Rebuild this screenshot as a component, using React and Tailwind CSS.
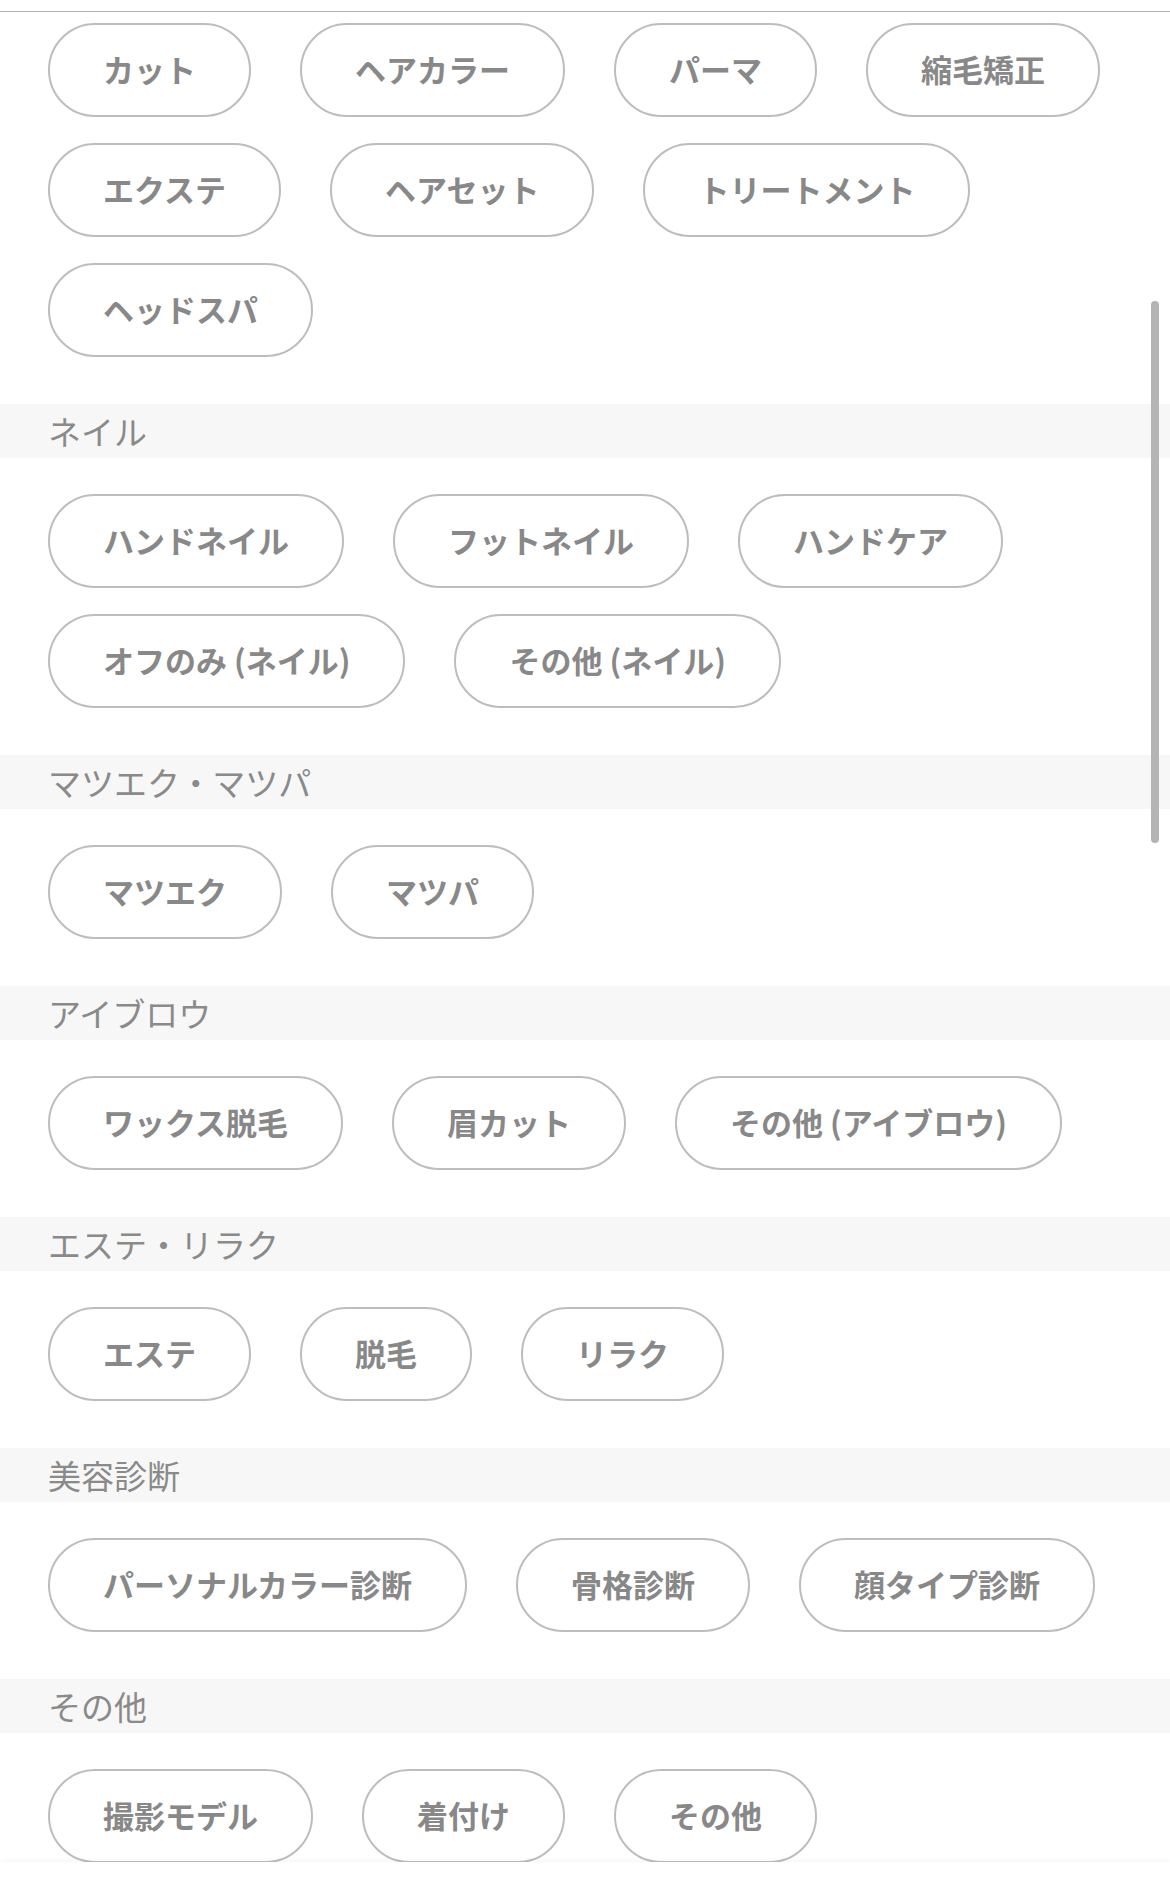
const sections = [
    {
        title: null,
        items: ['カット', 'ヘアカラー', 'パーマ', '縮毛矯正', 'エクステ', 'ヘアセット', 'トリートメント', 'ヘッドスパ'],
    },
    {
        title: 'ネイル',
        items: ['ハンドネイル', 'フットネイル', 'ハンドケア', 'オフのみ (ネイル)', 'その他 (ネイル)'],
    },
    {
        title: 'マツエク・マツパ',
        items: ['マツエク', 'マツパ'],
    },
    {
        title: 'アイブロウ',
        items: ['ワックス脱毛', '眉カット', 'その他 (アイブロウ)'],
    },
    {
        title: 'エステ・リラク',
        items: ['エステ', '脱毛', 'リラク'],
    },
    {
        title: '美容診断',
        items: ['パーソナルカラー診断', '骨格診断', '顔タイプ診断'],
    },
    {
        title: 'その他',
        items: ['撮影モデル', '着付け', 'その他'],
    },
];

const Chip = ({ label }) => (
    <button
        type="button"
        className="h-[94px] px-[53px] pb-[3px] rounded-full border-2 border-[#bdbdbd] bg-white text-[31px] font-bold text-[#888888] leading-none whitespace-nowrap"
    >
        {label}
    </button>
);

const App = () => {
    return (
        <div
            className="relative min-h-[1890px] bg-white"
            style={{ fontFamily: '"Noto Sans CJK JP", "Noto Sans", sans-serif' }}
        >
            <div className="h-[12px] border-b border-[#b3b3b3] bg-white" />

            {sections.map((section, i) => (
                <section key={i}>
                    {section.title && (
                        <div className="h-[54px] bg-[#f7f7f7] px-[48px] flex items-center">
                            <h2 className="text-[33px] font-normal text-[#8a8a8a] leading-none">{section.title}</h2>
                        </div>
                    )}
                    <div className={`${section.title ? 'pt-[36px]' : 'pt-[11px]'} pb-[47px] px-[48px] flex flex-wrap gap-x-[49px] gap-y-[26px]`}>
                        {section.items.map((item) => (
                            <Chip key={item} label={item} />
                        ))}
                    </div>
                </section>
            ))}

            {/* scroll indicator */}
            <div className="absolute top-[301px] left-[1151px] w-[8px] h-[542px] rounded-full bg-[#b4b4b4]" />

            {/* bottom bar cutting off content */}
            <div className="fixed bottom-0 left-0 right-0 h-[28px] bg-white shadow-[0_-2px_4px_rgba(0,0,0,0.04)]" />
        </div>
    );
};

export default App;
